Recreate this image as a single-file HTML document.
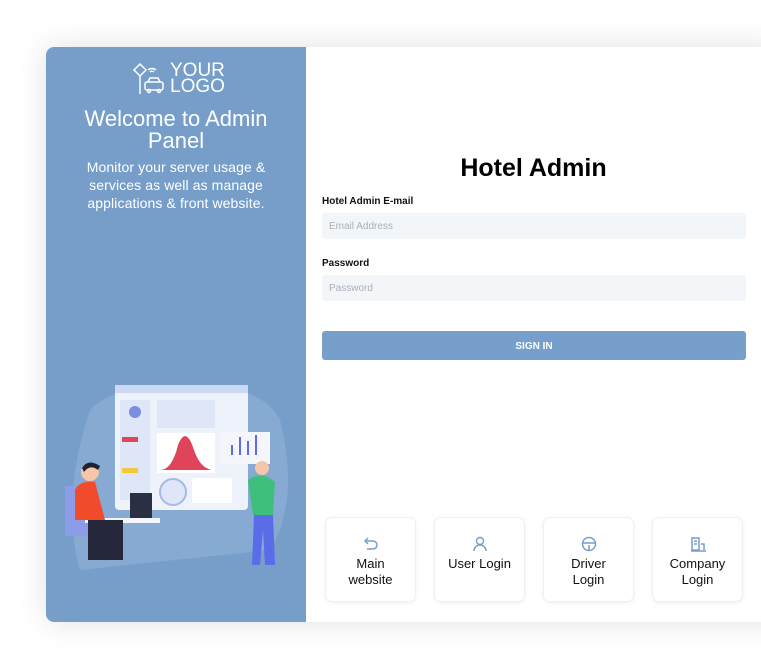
<!DOCTYPE html>
<html><head><meta charset="utf-8"><style>
*{margin:0;padding:0;box-sizing:border-box}
body{width:761px;height:664px;background:#fff;font-family:"Liberation Sans",sans-serif;position:relative;overflow:hidden}
.card{position:absolute;left:46px;top:47px;width:740px;height:575px;box-shadow:0 0 30px rgba(0,0,0,0.12);border-radius:8px 0 0 8px;background:#fff}
.left{position:absolute;left:46px;top:47px;width:260px;height:575px;background:#769ec9;border-radius:8px 0 0 8px;color:#fff;text-align:center}
.left h1{position:absolute;top:61px;width:100%;font-size:22px;font-weight:normal;line-height:22px}
.left p{position:absolute;top:111px;width:100%;font-size:14px;line-height:18px;letter-spacing:0.1px}
.logo{position:absolute;top:15px;left:86px;display:flex;align-items:center;gap:4px}
.logo span{font-size:19px;line-height:16px;text-align:left}
.right h2{position:absolute;top:154px;left:306px;width:455px;text-align:center;font-size:25px;font-weight:bold;color:#000}
label{position:absolute;left:322px;font-size:10px;font-weight:bold;color:#111}
.inp{position:absolute;left:322px;width:424px;height:26px;background:#f3f6f9;border-radius:3px;font-size:10px;color:#a9b0b8;padding:8px 7px}
.btn{position:absolute;left:322px;top:331px;width:424px;height:29px;background:#779fcb;border-radius:3px;color:#fff;font-size:10px;font-weight:bold;text-align:center;line-height:31px}
.b{position:absolute;top:517px;width:91px;height:85px;border:1px solid #eef0f3;border-radius:7px;box-shadow:0 1px 4px rgba(0,0,0,0.06);text-align:center;font-size:13px;line-height:16px;color:#111;padding-top:18px;background:#fff}
.b svg{display:block;margin:0 auto 4px}
</style></head><body>
<div class="card"></div>
<div class="left">
 <div class="logo">
  <svg width="34" height="34" viewBox="0 0 34 34" fill="none" stroke="#fff" stroke-width="1.5"><path d="M8 2l6 6-6 6-6-6z"/><path d="M8 14v18"/><path d="M16 8a6 6 0 0 1 8 0M18 10a3 3 0 0 1 4 0"/><rect x="13" y="20" width="18" height="8" rx="2"/><path d="M16 20l2-4h8l2 4"/><circle cx="17" cy="29" r="1.5"/><circle cx="27" cy="29" r="1.5"/></svg>
  <span>YOUR<br>LOGO</span>
 </div>
 <h1>Welcome to Admin<br>Panel</h1>
 <p>Monitor your server usage &amp;<br>services as well as manage<br>applications &amp; front website.</p>
 <svg style="position:absolute;left:14px;top:333px" width="240" height="200" viewBox="0 0 240 200">
  <path d="M30 30 Q60 0 120 10 Q200 0 220 40 Q240 120 210 170 L20 190 Q0 120 30 30z" fill="#86aad2"/>
  <rect x="55" y="5" width="133" height="125" rx="4" fill="#eef2fb"/>
  <rect x="55" y="5" width="133" height="8" fill="#cdd8f2"/>
  <rect x="60" y="20" width="30" height="100" fill="#dfe6f7"/>
  <circle cx="75" cy="32" r="6" fill="#7b8ee0"/>
  <rect x="62" y="57" width="16" height="5" fill="#e0445a"/>
  <rect x="62" y="88" width="16" height="5" fill="#f0c93c"/>
  <rect x="97" y="20" width="58" height="28" fill="#dfe6f7"/>
  <rect x="97" y="53" width="58" height="40" fill="#fff"/>
  <path d="M100 90 Q112 90 118 65 Q126 45 134 70 Q140 88 152 90z" fill="#e0445a"/>
  <circle cx="113" cy="112" r="13" fill="#dfe6f7" stroke="#a7b8ea" stroke-width="2"/>
  <rect x="132" y="98" width="40" height="25" fill="#fff"/>
  <rect x="160" y="52" width="50" height="32" fill="#f4f6fc"/>
  <path d="M172 75v-10M180 75v-18M188 75v-14M196 75v-20" stroke="#5b6ce8" stroke-width="2"/>
  <rect x="5" y="106" width="25" height="50" fill="#8d9ce8"/>
  <rect x="25" y="138" width="75" height="5" fill="#f4f6fc"/>
  <rect x="70" y="113" width="22" height="25" fill="#2b2f44"/>
  <path d="M15 110 Q20 100 35 102 L45 140 L15 140z" fill="#f24b2c"/>
  <circle cx="30" cy="92" r="9" fill="#f6c6a8"/>
  <path d="M22 88 Q28 78 40 86 L38 90 Q30 84 24 92z" fill="#1e2233"/>
  <rect x="28" y="140" width="35" height="40" fill="#25283a"/>
  <circle cx="202" cy="88" r="7" fill="#f6c6a8"/>
  <path d="M188 100 Q202 90 215 102 L213 135 L193 135z" fill="#3fbf7c"/>
  <path d="M194 135 L213 135 L215 185 L205 185 L203 150 L200 185 L192 185z" fill="#5b6ce8"/>
 </svg>
</div>
<div class="right">
 <h2>Hotel Admin</h2>
 <label style="top:196px">Hotel Admin E-mail</label>
 <div class="inp" style="top:213px">Email Address</div>
 <label style="top:258px">Password</label>
 <div class="inp" style="top:275px">Password</div>
 <div class="btn">SIGN IN</div>
</div>
<div class="b" style="left:325px"><svg width="16" height="16" viewBox="0 0 16 16" fill="none" stroke="#779fcb" stroke-width="1.5"><path d="M5 2L2 5l3 3"/><path d="M2 5h8a4 4 0 0 1 0 8H4"/></svg>Main<br>website</div>
<div class="b" style="left:434px"><svg width="16" height="16" viewBox="0 0 16 16" fill="none" stroke="#779fcb" stroke-width="1.5"><circle cx="8" cy="5" r="3.5"/><path d="M2 15a6 6 0 0 1 12 0"/></svg>User Login</div>
<div class="b" style="left:543px"><svg width="16" height="16" viewBox="0 0 16 16" fill="none" stroke="#779fcb" stroke-width="1.5"><circle cx="8" cy="8" r="6.5"/><path d="M2 7h12M8 9v5"/></svg>Driver<br>Login</div>
<div class="b" style="left:652px"><svg width="16" height="16" viewBox="0 0 16 16" fill="none" stroke="#779fcb" stroke-width="1.5"><rect x="2" y="2" width="7" height="12"/><path d="M4 5h3M4 8h3M11 8h3v6M1 15h15"/></svg>Company<br>Login</div>
</body></html>
